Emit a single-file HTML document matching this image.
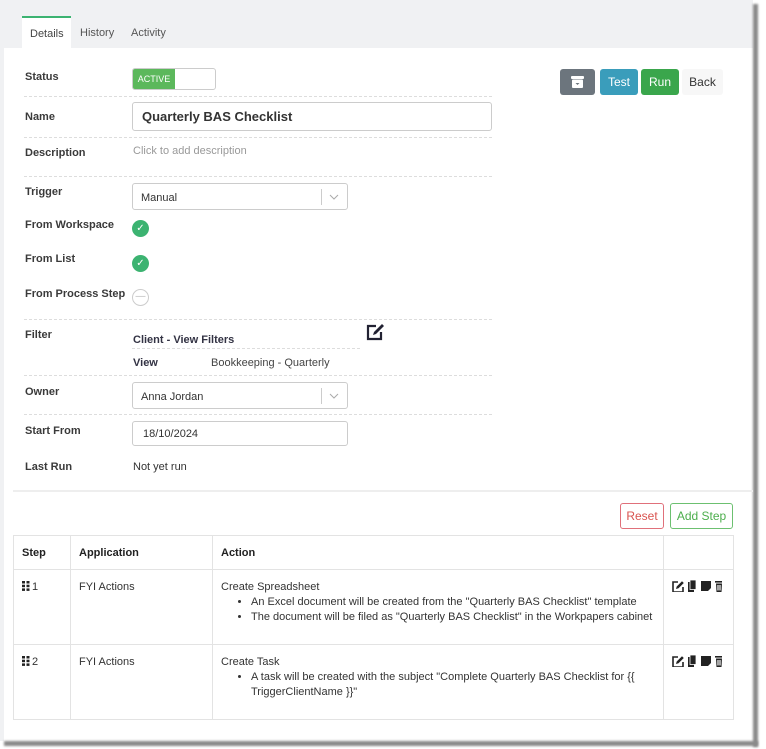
<!DOCTYPE html>
<html><head><style>
*{box-sizing:border-box;margin:0;padding:0}
body{width:766px;height:749px;background:#fff;font-family:"Liberation Sans",sans-serif;font-size:11px;color:#333;position:relative;overflow:hidden}
.a{position:absolute}
.lbl{position:absolute;left:25px;font-weight:bold;color:#3a3a3a;font-size:11px}
.dash{position:absolute;left:24px;width:468px;border-top:1px dashed #ddd;height:0}
.inp{position:absolute;border:1px solid #ccc;border-radius:3px;background:#fff}
.chk{position:absolute;left:132px;width:17px;height:17px;border-radius:50%;background:#3cb371;color:#fff;font-size:10px;text-align:center;line-height:17px}
.btn{position:absolute;border-radius:3px;font-size:12px;text-align:center;line-height:26px;height:26px}
td,th{border:1px solid #e3e3e3;vertical-align:top;text-align:left;padding:0 8px}
th{height:34px;vertical-align:middle;font-weight:bold;color:#222}
table{border-collapse:collapse;position:absolute;left:13px;top:535px;width:721px;font-size:11px}
ul{margin:2px 0 0 30px}
li{line-height:15px}
.dots{display:inline-block;vertical-align:-1px;margin-right:2px}
</style></head><body>
<div class="a" style="left:0;top:0;width:753px;height:48px;background:#f0f1f3"></div>
<div class="a" style="left:0;top:0;width:4px;height:741px;background:#f0f1f3"></div>
<div class="a" style="left:753px;top:4px;width:5px;height:743px;background:#8a8a8a;filter:blur(1px)"></div>
<div class="a" style="left:4px;top:741px;width:754px;height:5px;background:#8a8a8a;filter:blur(1px)"></div>
<div class="a" style="left:22px;top:16px;width:49px;height:33px;background:#fff;border-top:2px solid #3cb371"></div>
<div class="a" style="left:30px;top:28px;font-size:11px;color:#444">Details</div>
<div class="a" style="left:80px;top:27px;font-size:11px;color:#555">History</div>
<div class="a" style="left:131px;top:27px;font-size:11px;color:#555">Activity</div>

<div class="lbl" style="top:71px">Status</div>
<div class="inp" style="left:132px;top:68px;width:84px;height:22px"></div>
<div class="a" style="left:133px;top:69px;width:42px;height:20px;background:#5cb85c;color:#fff;font-size:9px;line-height:20px;text-align:center;border-radius:2px 0 0 2px">ACTIVE</div>
<div class="dash" style="top:96px"></div>
<div class="lbl" style="top:111px">Name</div>
<div class="inp" style="left:132px;top:102px;width:360px;height:29px;font-size:13px;font-weight:bold;color:#333;line-height:28px;padding-left:9px">Quarterly BAS Checklist</div>
<div class="dash" style="top:137px"></div>
<div class="lbl" style="top:147px">Description</div>
<div class="a" style="left:133px;top:145px;color:#999">Click to add description</div>
<div class="dash" style="top:176px"></div>
<div class="lbl" style="top:186px">Trigger</div>
<div class="inp" style="left:132px;top:183px;width:216px;height:27px;line-height:28px;padding-left:8px;color:#333">Manual</div>
<div class="a" style="left:321px;top:189px;width:1px;height:16px;background:#ccc"></div>
<svg class="a" style="left:329px;top:194px" width="10" height="6"><path d="M1 1l4 4 4-4" fill="none" stroke="#aaa"/></svg>
<div class="lbl" style="top:219px">From Workspace</div>
<div class="chk" style="top:220px">&#10003;</div>
<div class="lbl" style="top:253px">From List</div>
<div class="chk" style="top:255px">&#10003;</div>
<div class="lbl" style="top:288px">From Process Step</div>
<div class="a" style="left:132px;top:289px;width:17px;height:17px;border-radius:50%;border:1px solid #ccc;color:#bbb;text-align:center;line-height:14px;font-size:10px">&#8212;</div>
<div class="dash" style="top:319px"></div>
<div class="lbl" style="top:329px">Filter</div>
<div class="a" style="left:133px;top:334px;font-weight:bold;color:#334">Client - View Filters</div>
<svg class="a" style="left:366px;top:323px" width="19" height="18" viewBox="0 0 19 18"><path d="M10 3H2v13h13V9" fill="none" stroke="#223" stroke-width="2.2"/><path d="M7 12l1-3 8-8 2 2-8 8z" fill="#223"/></svg>
<div class="a" style="left:132px;top:348px;width:228px;border-top:1px dashed #ddd"></div>
<div class="a" style="left:133px;top:357px;font-weight:bold;color:#334">View</div>
<div class="a" style="left:211px;top:357px;color:#444">Bookkeeping - Quarterly</div>
<div class="dash" style="top:375px"></div>
<div class="lbl" style="top:386px">Owner</div>
<div class="inp" style="left:132px;top:382px;width:216px;height:27px;line-height:28px;padding-left:8px">Anna Jordan</div>
<div class="a" style="left:321px;top:388px;width:1px;height:16px;background:#ccc"></div>
<svg class="a" style="left:329px;top:393px" width="10" height="6"><path d="M1 1l4 4 4-4" fill="none" stroke="#aaa"/></svg>
<div class="dash" style="top:414px"></div>
<div class="lbl" style="top:425px">Start From</div>
<div class="inp" style="left:132px;top:421px;width:216px;height:25px;line-height:25px;padding-left:10px">18/10/2024</div>
<div class="lbl" style="top:461px">Last Run</div>
<div class="a" style="left:133px;top:461px">Not yet run</div>

<div class="btn" style="left:560px;top:69px;width:35px;background:#6c757d">
<svg style="margin-top:7px" width="13" height="12" viewBox="0 0 13 12"><rect x="0" y="0" width="13" height="3" rx="1" fill="#fff"/><rect x="1" y="3.5" width="11" height="8.5" rx="1" fill="#fff"/><path d="M4.5 7l2 2 2-2z" fill="#6c757d"/></svg></div>
<div class="btn" style="left:600px;top:69px;width:38px;background:#3a9dbb;color:#fff">Test</div>
<div class="btn" style="left:641px;top:69px;width:38px;background:#3aa64c;color:#fff">Run</div>
<div class="btn" style="left:682px;top:69px;width:41px;background:#f7f7f7;color:#333">Back</div>

<div class="a" style="left:13px;top:490px;width:740px;height:2px;background:#eee"></div>
<div class="btn" style="left:620px;top:503px;width:44px;border:1px solid #e0707a;color:#d9534f;line-height:24px">Reset</div>
<div class="btn" style="left:670px;top:503px;width:63px;border:1px solid #6cc070;color:#4cae4c;line-height:24px">Add Step</div>

<table>
<tr><th style="width:57px">Step</th><th style="width:142px">Application</th><th style="width:451px">Action</th><th></th></tr>
<tr style="height:75px"><td style="padding-top:11px"><svg class="dots" width="8" height="10"><g fill="#222"><rect x="0" y="0" width="3" height="2.5"/><rect x="4.5" y="0" width="3" height="2.5"/><rect x="0" y="3.7" width="3" height="2.5"/><rect x="4.5" y="3.7" width="3" height="2.5"/><rect x="0" y="7.4" width="3" height="2.5"/><rect x="4.5" y="7.4" width="3" height="2.5"/></g></svg>1</td><td style="padding-top:11px">FYI Actions</td><td style="padding-top:11px">Create Spreadsheet<ul><li>An Excel document will be created from the "Quarterly BAS Checklist" template</li><li>The document will be filed as "Quarterly BAS Checklist" in the Workpapers cabinet</li></ul></td><td style="padding-top:10px;padding-left:8px"><svg width="50" height="12" viewBox="0 0 50 12"><g fill="#222"><path d="M6 2H1v10h10V7" fill="none" stroke="#222" stroke-width="1.6"/><path d="M4 9l.7-2.5L10 1.2l1.8 1.8L6.5 8.3z"/><rect x="16" y="2" width="6" height="10"/><rect x="18" y="0" width="6" height="9.5" stroke="#fff" stroke-width=".8"/><path d="M29 1h10v7l-3 3h-7z"/><rect x="43" y="1" width="8" height="1.6"/><path d="M44 3.5h6l-.5 8.5h-5z"/></g><g stroke="#fff" stroke-width=".8"><path d="M45.8 5v5.5M47 5v5.5M48.2 5v5.5"/></g></svg></td></tr>
<tr style="height:75px"><td style="padding-top:11px"><svg class="dots" width="8" height="10"><g fill="#222"><rect x="0" y="0" width="3" height="2.5"/><rect x="4.5" y="0" width="3" height="2.5"/><rect x="0" y="3.7" width="3" height="2.5"/><rect x="4.5" y="3.7" width="3" height="2.5"/><rect x="0" y="7.4" width="3" height="2.5"/><rect x="4.5" y="7.4" width="3" height="2.5"/></g></svg>2</td><td style="padding-top:11px">FYI Actions</td><td style="padding-top:11px">Create Task<ul><li>A task will be created with the subject "Complete Quarterly BAS Checklist for {{ TriggerClientName }}"</li></ul></td><td style="padding-top:10px;padding-left:8px"><svg width="50" height="12" viewBox="0 0 50 12"><g fill="#222"><path d="M6 2H1v10h10V7" fill="none" stroke="#222" stroke-width="1.6"/><path d="M4 9l.7-2.5L10 1.2l1.8 1.8L6.5 8.3z"/><rect x="16" y="2" width="6" height="10"/><rect x="18" y="0" width="6" height="9.5" stroke="#fff" stroke-width=".8"/><path d="M29 1h10v7l-3 3h-7z"/><rect x="43" y="1" width="8" height="1.6"/><path d="M44 3.5h6l-.5 8.5h-5z"/></g><g stroke="#fff" stroke-width=".8"><path d="M45.8 5v5.5M47 5v5.5M48.2 5v5.5"/></g></svg></td></tr>
</table>
</body></html>
